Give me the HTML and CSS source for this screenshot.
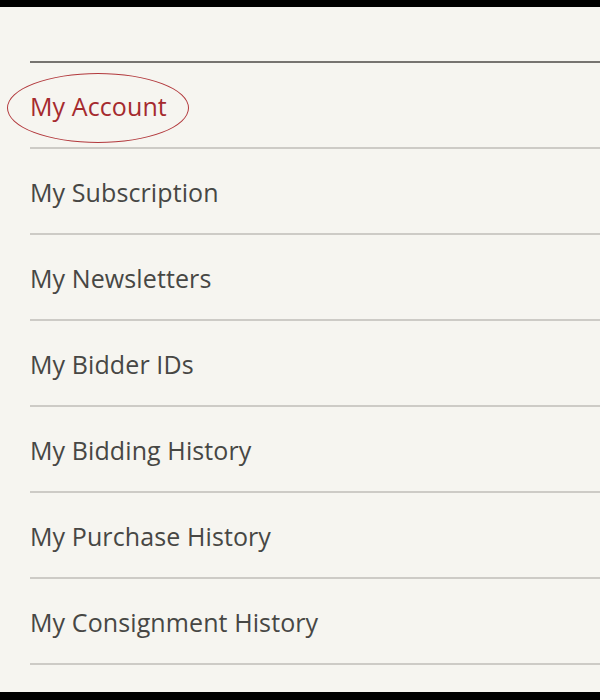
FILE: index.html
```html
<!DOCTYPE html>
<html>
<head>
<meta charset="utf-8">
<link rel="stylesheet" href="styles.css">
</head>
<body>
<div class="page">
  <nav class="menu">
    <ul class="menu-list">
      <li class="menu-item active"><a class="menu-link" href="#"><span class="circled">My Account</span></a></li>
      <li class="menu-item"><a class="menu-link" href="#">My Subscription</a></li>
      <li class="menu-item"><a class="menu-link" href="#">My Newsletters</a></li>
      <li class="menu-item"><a class="menu-link" href="#">My Bidder IDs</a></li>
      <li class="menu-item"><a class="menu-link" href="#">My Bidding History</a></li>
      <li class="menu-item"><a class="menu-link" href="#">My Purchase History</a></li>
      <li class="menu-item"><a class="menu-link" href="#">My Consignment History</a></li>
    </ul>
  </nav>
</div>
</body>
</html>
```

FILE: styles.css
```css
html, body {
  margin: 0;
  padding: 0;
  background: #000;
}
.page {
  box-sizing: border-box;
  height: 700px;
  border-top: 7px solid #000;
  border-bottom: 8px solid #000;
  background: #f6f5f0;
  padding-top: 54px;
  padding-left: 30px;
  font-family: "Open Sans", "Noto Sans", sans-serif;
}
.menu-list {
  list-style: none;
  margin: 0;
  padding: 0;
  border-top: 2px solid #767470;
}
.menu-item {
  height: 84px;
  border-bottom: 2px solid #cdcbc6;
  display: flex;
  align-items: center;
}
.menu-link {
  color: #474744;
  text-decoration: none;
  font-size: 25px;
  letter-spacing: 0.1px;
  padding-top: 2px;
}
.active .menu-link {
  color: #a52a2e;
}
.circled {
  position: relative;
}
.circled::before {
  content: "";
  position: absolute;
  left: -23px;
  top: -16px;
  width: 180px;
  height: 68px;
  border: 1px solid #b2383c;
  border-radius: 50%;
}
```
